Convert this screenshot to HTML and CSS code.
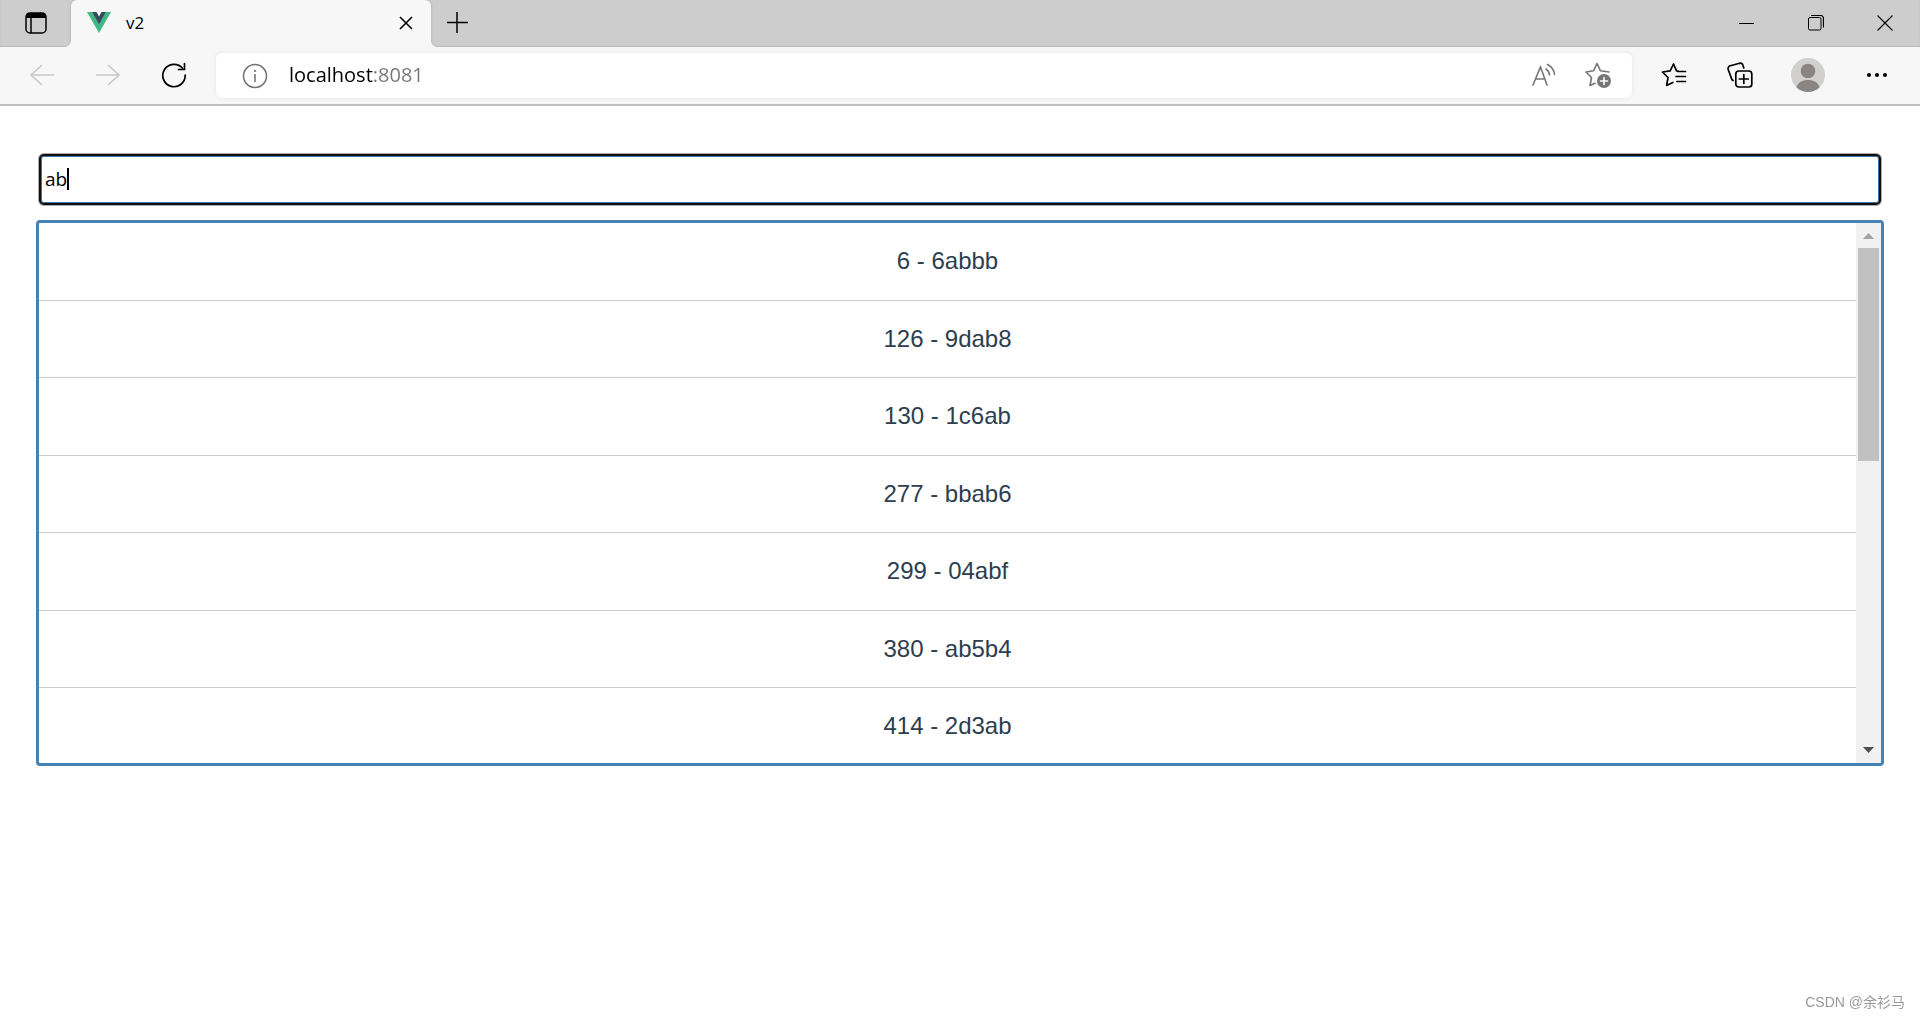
FILE: index.html
```html
<!DOCTYPE html>
<html lang="en">
<head>
    <meta charset="UTF-8">
    <meta name="viewport" content="width=device-width, initial-scale=1.0">
    <title>v2</title>
    <link rel="stylesheet" href="styles.css">
</head>
<body>

    <header class="browser">
        <div class="tab-bar">
            <button class="tab-actions" aria-label="Tab actions">
                <svg width="22" height="22" viewBox="0 0 22 22"><rect x="1" y="1" width="20" height="20" rx="4" fill="none" stroke="#000" stroke-width="1.5"/><path d="M1 6V4a3 3 0 0 1 3-3h14a3 3 0 0 1 3 3v2z"/><path d="M6 5v16" stroke="#000" stroke-width="1.5"/></svg>
            </button>
            <div class="tab">
                <svg width="24" height="21" viewBox="0 0 24 21"><path fill="#41b883" d="M0 0h5l7 12 7-12h5L12 21z"/><path fill="#34495e" d="M5 0h4.500l2.500 4.500L14.500 0H19l-7 12.500z"/></svg>
                <span class="tab-title">v2</span>
                <button class="tab-close" aria-label="Close tab">
                    <svg width="14" height="14" viewBox="0 0 14 14"><path d="M1 1l12 12M13 1L1 13" stroke="#000" stroke-width="1.600"/></svg>
                </button>
            </div>
            <button class="new-tab" aria-label="New tab">
                <svg width="22" height="22" viewBox="0 0 22 22"><path d="M11 0v21M1 10.500h21" stroke="#000" stroke-width="1.500"/></svg>
            </button>
            <div class="window-buttons">
                <button aria-label="Minimize"><svg width="16" height="16" viewBox="0 0 16 16"><path d="M0 8.500h15" stroke="#000"/></svg></button>
                <button aria-label="Restore"><svg width="16" height="16" viewBox="0 0 16 16" fill="none" stroke="#000"><rect x=".5" y="2.500" width="12.500" height="12.500" rx="1.500"/><path d="M3 .5h9.500a3 3 0 0 1 3 3V12.500" stroke-width="1.200"/></svg></button>
                <button aria-label="Close"><svg width="16" height="16" viewBox="0 0 16 16"><path d="M.5 .5l15 15M15.500 .5l-15 15" stroke="#000" stroke-width="1.100"/></svg></button>
            </div>
        </div>

        <div class="toolbar">
            <div class="tools">
                <button aria-label="Back" disabled><svg width="24" height="22" viewBox="0 0 24 22" fill="none" stroke="#c9c9c9" stroke-width="1.600"><path d="M24 11H1M12 1L1 11l11 10"/></svg></button>
                <button aria-label="Forward" disabled><svg width="24" height="22" viewBox="0 0 24 22" fill="none" stroke="#c9c9c9" stroke-width="1.600"><path d="M0 11h23M12 1l11 10-11 10"/></svg></button>
                <button aria-label="Refresh"><svg width="26" height="26" viewBox="0 0 26 26" fill="none" stroke="#000" stroke-width="1.700" stroke-linecap="round"><path d="M21.500 6.200A11.200 11.200 0 1 0 24.200 13"/><path d="M23.500 1.500v6h-6"/></svg></button>
            </div>
            <div class="address">
                <svg width="26" height="26" viewBox="0 0 26 26"><circle cx="13" cy="13" r="11.500" fill="none" stroke="#707070" stroke-width="1.500"/><path d="M13 11v8" stroke="#707070" stroke-width="1.500"/><circle cx="13" cy="8" r="1.100" fill="#707070"/></svg>
                <input class="url" type="text" aria-label="Address" value="localhost:8081">
                <button aria-label="Read aloud"><svg width="24" height="24" viewBox="0 0 24 24" fill="none" stroke="#767676" stroke-width="1.600" stroke-linecap="round"><path d="M1 22L8.500 4 15 22M3.500 16h9.500M14 6q3 2 3.500 6M15.500 1.500q6.500 3.500 7 10"/></svg></button>
                <button aria-label="Add to favorites"><svg width="26" height="26" viewBox="0 0 26 26" fill="none" stroke="#767676" stroke-width="1.600" stroke-linejoin="round" stroke-linecap="round"><path d="M24 10l-8.500-1.200L12 1.500 8.500 8.800 1 10l5.500 5.500L5 23.500l5-2.200"/><circle cx="19" cy="19" r="7" fill="#767676" stroke="none"/><path d="M19 15.500v7M15.500 19h7" stroke="#fff"/></svg></button>
            </div>
            <div class="tools">
                <button aria-label="Favorites"><svg width="26" height="26" viewBox="0 0 26 26" fill="none" stroke="#000" stroke-width="1.700" stroke-linejoin="round" stroke-linecap="round"><path d="M17 9l-1.500-.2L12.500 2 9.200 8.800 1.500 10l5.500 5.500-1.400 8 6.200-3M17 9.500h7.500M15 14.500h9.500M16 19.500h8.500"/></svg></button>
                <button aria-label="Collections"><svg width="26" height="26" viewBox="0 0 26 26" fill="none" stroke="#000" stroke-width="1.700" stroke-linecap="round"><path d="M6 18.500a3 3 0 0 1-1.500-2L1.200 7.500a3 3 0 0 1 2.200-3.800L12.500 1.300a3 3 0 0 1 3.500 2.200l.8 2.500"/><rect x="8.800" y="9" width="16" height="16" rx="3"/><path d="M16.800 12.500v9M12.300 17h9"/></svg></button>
                <button class="wide" aria-label="Profile"><svg width="34" height="34" viewBox="0 0 34 34"><circle cx="17" cy="17" r="17" fill="#d2d0ce"/><circle cx="17" cy="13" r="7.300" fill="#8a8583"/><path d="M5.500 29.500C7 24 11 22 17 22s10 2 11.500 7.500a17 17 0 0 1-23 0z" fill="#8a8583"/></svg></button>
                <button class="wide" aria-label="Settings and more"><svg width="20" height="4" viewBox="0 0 20 4"><circle cx="2" cy="2" r="2"/><circle cx="10" cy="2" r="2"/><circle cx="18" cy="2" r="2"/></svg></button>
            </div>
        </div>
    </header>

    <main class="app">
        <div class="search">
            <input class="search-input" type="text" aria-label="Search" value="ab">
            <span class="caret"></span>
        </div>
        <div class="list">
            <ul class="items">
                <li>6 - 6abbb</li>
                <li>126 - 9dab8</li>
                <li>130 - 1c6ab</li>
                <li>277 - bbab6</li>
                <li>299 - 04abf</li>
                <li>380 - ab5b4</li>
                <li>414 - 2d3ab</li>
            </ul>
            <div class="scrollbar">
                <svg class="arrow" width="25" height="25" viewBox="0 0 25 25"><path d="M7 16h11l-5.500-6z" fill="#a3a3a3"/></svg>
                <div class="thumb"></div>
                <svg class="arrow" width="25" height="25" viewBox="0 0 25 25"><path d="M7 9h11l-5.500 6z" fill="#505050"/></svg>
            </div>
        </div>
    </main>

    <div class="watermark">CSDN @余衫马</div>

</body>
</html>
```
FILE: styles.css
```css
* {
    margin: 0;
    padding: 0;
    box-sizing: border-box;
}
body {
    font-family: "Liberation Sans", Arial, sans-serif;
    background-color: #fff;
    color: #2c3e50;
}
button {
    display: flex;
    justify-content: center;
    align-items: center;
    padding-bottom: 2px;
    border: none;
    background: none;
}
svg {
    flex: none;
}

/* browser window */
.browser {
    font-family: "Open Sans", sans-serif;
    color: #000;
    background-color: #f7f7f7;
    border-bottom: 2px solid #bebebe;
}
.tab-bar {
    display: flex;
    height: 47px;
    background-color: #cdcdcd;
    box-shadow: inset 0 -1px 1px #bbb;
}
.tab-actions {
    width: 71px;
}
.tab {
    position: relative;
    display: flex;
    align-items: center;
    gap: 15px;
    width: 360px;
    padding: 0 11px 2px 16px;
    border-radius: 6px 6px 0 0;
    background-color: #f7f7f7;
    box-shadow: 0 0 3px #aaa;
    clip-path: inset(0 -5px 0 -5px);
}
/* curved feet of the active tab */
.tab::before,
.tab::after {
    content: "";
    position: absolute;
    bottom: 0;
    width: 5px;
    height: 5px;
}
.tab::before {
    right: 100%;
    background: radial-gradient(circle at 0 0, transparent 4px, #f7f7f7 5px);
}
.tab::after {
    left: 100%;
    background: radial-gradient(circle at 100% 0, transparent 4px, #f7f7f7 5px);
}
.tab-title {
    flex: 1;
    font-size: 17px;
}
.tab-close {
    width: 28px;
    height: 28px;
    padding: 0;
}
.new-tab {
    width: 51px;
}
.window-buttons {
    display: flex;
    margin-left: auto;
    padding-right: 1px;
}
.window-buttons button {
    width: 69px;
}
.toolbar {
    display: flex;
    align-items: center;
    gap: 9px;
    height: 57px;
    padding: 0 9px;
}
.tools {
    display: flex;
}
.tools button {
    width: 66px;
    height: 45px;
}
.tools .wide {
    width: 69px;
}
.address {
    flex: 1;
    display: flex;
    align-items: center;
    height: 45px;
    padding: 0 7px 0 26px;
    border-radius: 6px;
    background-color: #fff;
    box-shadow: 0 0 4px #e6e6e6;
}
.url {
    flex: 1;
    margin-left: 21px;
    padding-bottom: 2px;
    border: none;
    outline: none;
    font-family: inherit;
    font-size: 20px;
    color: transparent;
    background: linear-gradient(to right, #000 84px, #767676 84px);
    -webkit-background-clip: text;
    background-clip: text;
}
.address button {
    width: 54px;
    height: 45px;
}

/* search page */
.app {
    padding: 48px 36px;
}
.search {
    position: relative;
    margin: 0 3px 15px;
}
.search-input {
    display: block;
    width: 100%;
    height: 51px;
    padding: 0 4px 2px;
    border: 2px solid #101010;
    border-radius: 5px;
    outline: none;
    box-shadow: 0 0 0 1px #aaa, inset 0 0 0 1px #3a76a6;
    font-family: "Open Sans", sans-serif;
    font-size: 19px;
    color: #000;
}
.caret {
    position: absolute;
    top: 14px;
    left: 28px;
    width: 2px;
    height: 22px;
    background-color: #000;
}
.list {
    display: flex;
    height: 546px;
    border: 3px solid #4682b4;
    border-radius: 4px;
    overflow: hidden;
}
.items {
    flex: 1;
    display: grid;
    grid-auto-rows: 78px 77px;
    list-style: none;
    font-size: 24px;
    text-align: center;
}
.items li {
    line-height: 76px;
    border-bottom: 1px solid #ccc;
}
.items li:last-child {
    border-bottom: none;
}
.scrollbar {
    display: flex;
    flex-direction: column;
    justify-content: space-between;
    width: 25px;
    background-color: #f1f1f1;
}
.thumb {
    height: 213px;
    margin: 0 2px auto;
    background-color: #c1c1c1;
}

.watermark {
    position: fixed;
    right: 15px;
    bottom: 8px;
    font-family: "Liberation Sans", "Noto Sans CJK SC", sans-serif;
    font-size: 14px;
    color: #999;
}
```
